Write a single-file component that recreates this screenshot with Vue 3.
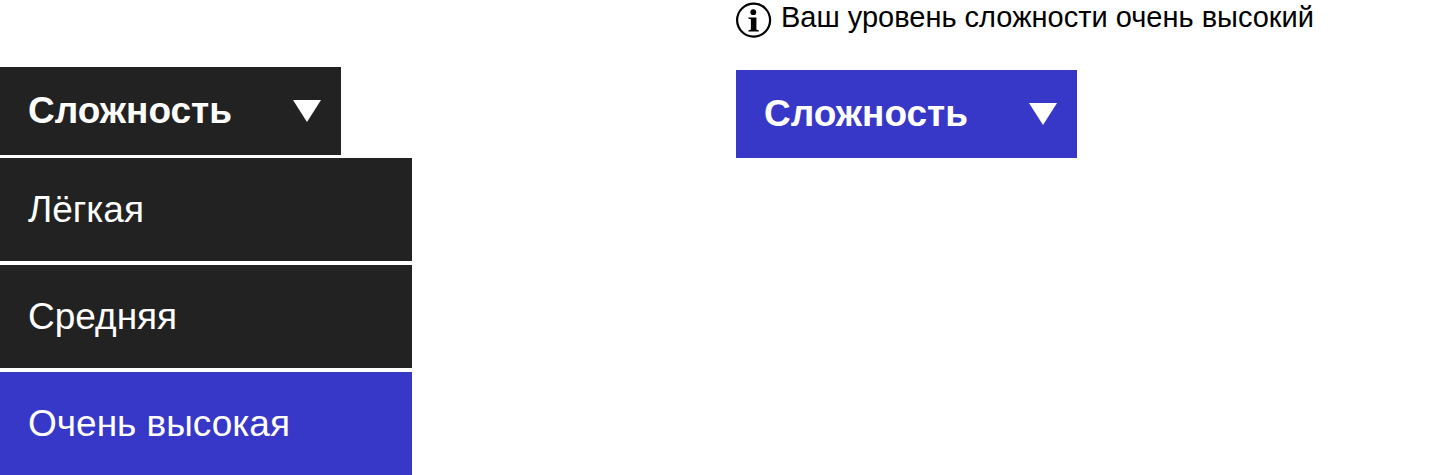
<script setup>
import { ref } from 'vue'

const levels = ['Лёгкая', 'Средняя', 'Очень высокая']
const selected = ref('Очень высокая')
</script>

<template>
  <main class="page">
    <section class="picker">
      <button class="toggle" type="button" aria-expanded="true" aria-controls="levels">
        <span>Сложность</span>
        <svg class="arrow" viewBox="0 0 28 22" aria-hidden="true"><path d="M0 0H28L14 22Z" /></svg>
      </button>
      <div id="levels" class="menu">
        <button
          v-for="level in levels"
          :key="level"
          type="button"
          class="item"
          :class="{ active: level === selected }"
          @click="selected = level"
        >{{ level }}</button>
      </div>
    </section>

    <section class="result">
      <p class="message">
        <svg class="info" viewBox="0 0 36 36" aria-hidden="true">
          <circle cx="17.6" cy="18.1" r="16.5" fill="none" stroke="#000" stroke-width="2.2" />
          <circle cx="17.3" cy="10.2" r="2.9" />
          <path d="M12.3 15.4H20.4V27.6L22.9 28.4V29.5H12.3V28.4L14.9 27.6V17.2L12.3 16.6Z" />
        </svg>
        <span>Ваш уровень сложности очень высокий</span>
      </p>
      <button class="toggle chosen" type="button" aria-expanded="false">
        <span>Сложность</span>
        <svg class="arrow" viewBox="0 0 28 22" aria-hidden="true"><path d="M0 0H28L14 22Z" /></svg>
      </button>
    </section>
  </main>
</template>

<style>
body {
  margin: 0;
  background: #fff;
}
</style>

<style scoped>
.page {
  display: grid;
  grid-template-columns: 736fr 701fr;
  align-items: start;
  font-family: "Liberation Sans", Arial, sans-serif;
  color: #000;
}

.picker {
  padding-top: 67px;
}

button {
  border: 0;
  margin: 0;
  font-family: inherit;
  font-size: 37px;
  line-height: 40px;
  color: #fff;
  background: #222;
  text-align: left;
  cursor: pointer;
}

.toggle {
  display: flex;
  align-items: center;
  justify-content: space-between;
  width: 100%;
  max-width: 341px;
  padding: 24px 20px 24px 28px;
  font-weight: 700;
}

.chosen,
.item.active {
  background: #3838c8;
}

.arrow {
  width: 28px;
  height: 22px;
  fill: #fff;
}

.menu {
  display: flex;
  flex-direction: column;
  gap: 4px;
  max-width: 412px;
  margin-top: 3px;
}

.item {
  padding: 32px 28px 31px;
}

.message {
  display: flex;
  align-items: flex-start;
  gap: 9px;
  margin: 0;
  padding: 2px 0 32px;
  font-size: 29px;
  line-height: 30px;
}

.info {
  flex: none;
  width: 36px;
  height: 36px;
}
</style>
